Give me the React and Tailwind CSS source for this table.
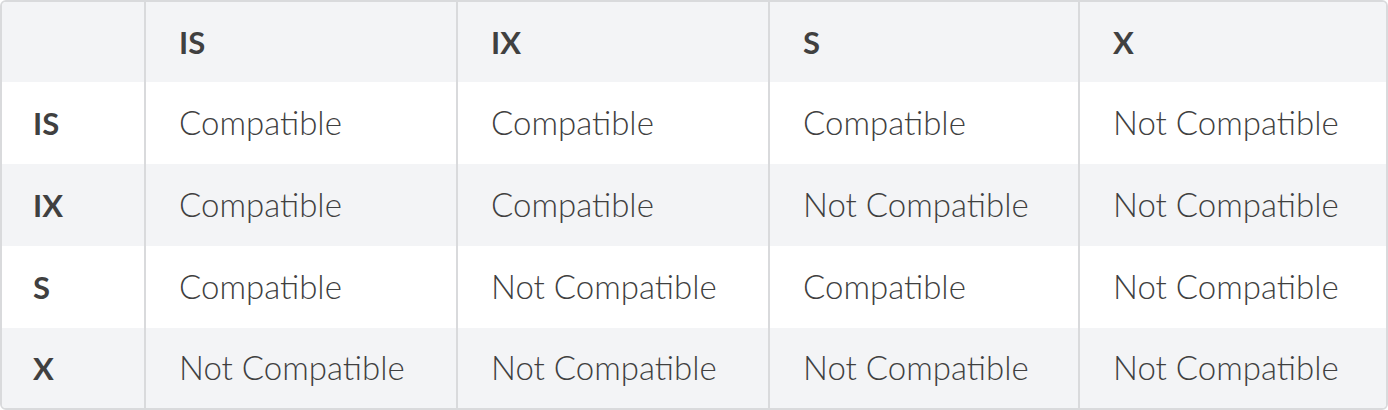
const columns = ["IS", "IX", "S", "X"];

const rows = [
  { name: "IS", values: ["Compatible", "Compatible", "Compatible", "Not Compatible"] },
  { name: "IX", values: ["Compatible", "Compatible", "Not Compatible", "Not Compatible"] },
  { name: "S", values: ["Compatible", "Not Compatible", "Compatible", "Not Compatible"] },
  { name: "X", values: ["Not Compatible", "Not Compatible", "Not Compatible", "Not Compatible"] },
];

const widths = ["w-[143px]", "w-[312px]", "w-[312px]", "w-[310px]", "w-[307px]"];
const heights = ["h-[82px]", "h-[82px]", "h-[82px]", "h-[80px]"];

export default function App() {
  return (
    <div className="w-[1388px] h-[410px] bg-white" style={{ fontFamily: "Lato, 'Open Sans', sans-serif" }}>
      <div className="border-2 border-[#d9dadc] rounded-md overflow-hidden">
        <table className="table-fixed border-collapse w-full text-[#404040]">
          <colgroup>
            {widths.map((w, i) => (
              <col key={i} className={w} />
            ))}
          </colgroup>
          <thead>
            <tr className="bg-[#f3f4f6] h-[80px]">
              <th className="p-0" />
              {columns.map((c) => (
                <th key={c} className="border-l-2 border-[#d9dadc] pl-[33px] text-left text-[31px] font-bold">
                  {c}
                </th>
              ))}
            </tr>
          </thead>
          <tbody>
            {rows.map((row, i) => (
              <tr key={row.name} className={`${heights[i]} ${i % 2 === 1 ? "bg-[#f3f4f6]" : "bg-white"}`}>
                <td className="pl-[31px] text-[31px] font-bold">{row.name}</td>
                {row.values.map((v, j) => (
                  <td key={j} className="border-l-2 border-[#d9dadc] pl-[33px] text-[33px] font-light whitespace-nowrap">
                    {v}
                  </td>
                ))}
              </tr>
            ))}
          </tbody>
        </table>
      </div>
    </div>
  );
}
